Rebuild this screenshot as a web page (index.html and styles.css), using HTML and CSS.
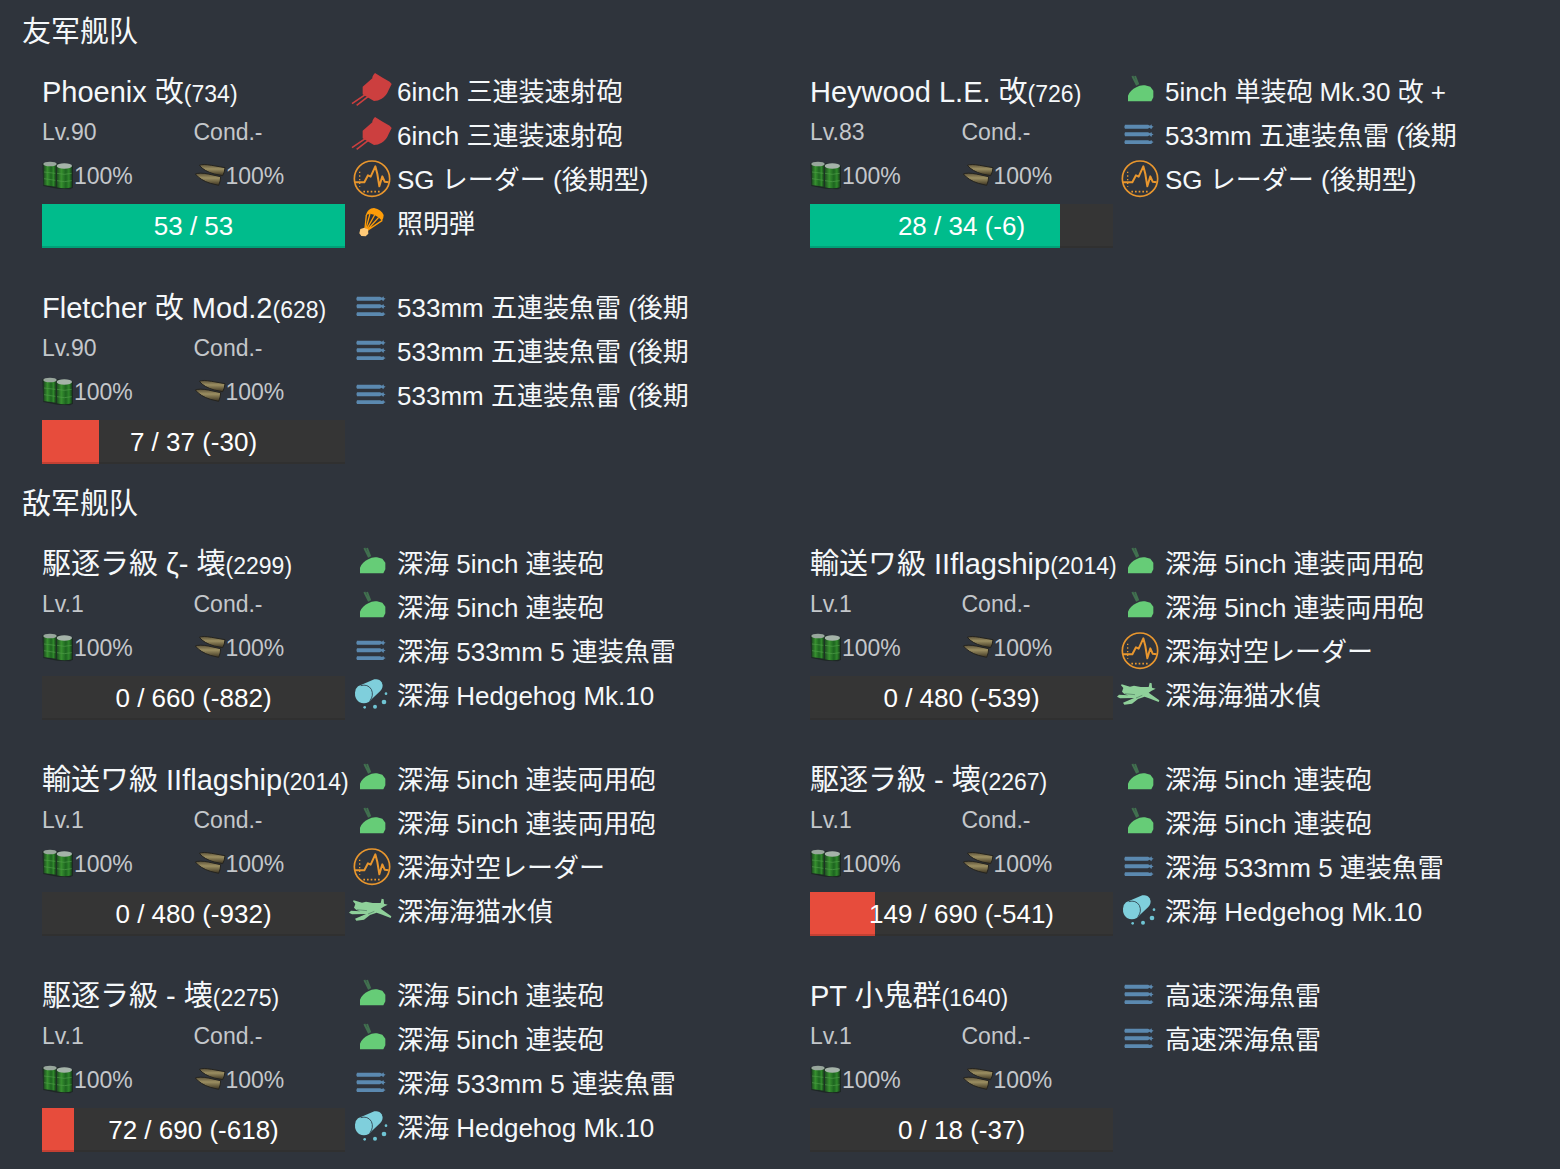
FILE: index.html
```html
<!DOCTYPE html>
<html lang="zh-CN">
<head>
    <meta charset="UTF-8">
    <meta name="viewport" content="width=device-width, initial-scale=1.0">
    <title>舰队</title>
    <link rel="stylesheet" href="styles.css">
</head>
<body>
    <svg class="sprite" aria-hidden="true">
        <defs>
            <linearGradient id="drum">
                <stop offset="0" stop-color="#1c4a20"/>
                <stop offset=".3" stop-color="#37912f"/>
                <stop offset=".6" stop-color="#1d6420"/>
                <stop offset=".8" stop-color="#2f882b"/>
                <stop offset="1" stop-color="#173d1a"/>
            </linearGradient>
            <linearGradient id="shell" x2="0" y2="1">
                <stop offset="0" stop-color="#5a5038"/>
                <stop offset=".4" stop-color="#9c8f62"/>
                <stop offset="1" stop-color="#3a3220"/>
            </linearGradient>
        </defs>
        <symbol id="medium-gun" viewBox="-6 0 132 132">
            <path fill="#cc3f3f" d="M75 9 98 23 119 35 125 42Q121 50 116 60Q108 80 95 86Q84 93 72 93L50 80 38 73V50L67 25Q66 19 75 9Z"/>
            <path stroke="#cc3f3f" stroke-width="5" fill="none" d="M47 73 6 101M54 80 20 106"/>
        </symbol>
        <symbol id="small-gun" viewBox="3 0 132 132">
            <path stroke="#41704f" stroke-width="6" d="M52 18 66 46M60 18 70 44"/>
            <path fill="#66cc77" d="M39 94V77Q46 60 64 52Q76 44 90 46L106 50 115 62V82L109 94Z"/>
        </symbol>
        <symbol id="torpedo" viewBox="3 132 132 132">
            <path fill="#5b89b0" d="M30 164H99L105 167 109 163 111 168 116 170 111 173 109 178 104 173 98 176H30Q26 170 30 164ZM30 187H99L105 190 109 186 111 191 116 193 111 196 109 201 104 196 98 199H30Q26 193 30 187ZM30 211H99L105 213 109 210 111 214 116 216 111 219 109 222H30Q26 217 30 211Z"/>
        </symbol>
        <symbol id="radar" viewBox="-6 9 132 132">
            <g fill="none" stroke="#e8962e">
                <circle cx="66" cy="71" r="53" stroke-width="5"/>
                <path stroke-width="6" stroke-linejoin="round" d="M15 82H43L54 61 62 65 76 34 82 57 88 94 97 64 104 80 116 82"/>
                <path stroke-width="4" stroke-dasharray="4 7" d="M29 50V96"/>
                <path stroke-width="5" stroke-dasharray="5 6" d="M40 110H92"/>
            </g>
        </symbol>
        <symbol id="flare" viewBox="-6 141 132 132">
            <path fill="#ff9d08" d="M47 181Q53 160 72 159Q94 164 101 180Q101 190 96 197L85 187 72 179 60 176Z"/>
            <path stroke="#ff9d08" stroke-width="4" fill="none" d="M49 180 45 220M60 176 48 221M74 180 50 223M86 187 52 225M97 196 51 227"/>
            <path fill="#ffca78" d="M31 222 43 218 54 223 55 236 47 244 34 243 28 235Z"/>
        </symbol>
        <symbol id="depth-charge" viewBox="-6 12 132 132">
            <path fill="#7fcfdc" d="M24 49 73 28Q88 25 95 37Q102 51 91 63L56 96Q42 104 27 96Q14 86 15 68Q16 55 24 49Z"/>
            <path stroke="#39525f" stroke-width="3" fill="none" d="M32 47Q53 41 64 58Q72 76 60 92"/>
            <g fill="#6fc4d3">
                <circle cx="102" cy="96" r="7"/>
                <circle cx="75" cy="110" r="6"/>
                <circle cx="44" cy="112" r="4"/>
                <circle cx="108" cy="71" r="4"/>
            </g>
        </symbol>
        <symbol id="seaplane" viewBox="18 12 132 132">
            <path fill="#8fd09a" d="M35 43 60 50 72 47 92 51 116 51 119 38 125 40 126 53 137 56 125 62 116 68 148 91 146 96 121 86 104 80 84 87 66 101 43 104 39 98 60 89 72 84 30 85 21 80 27 74 54 76 43 72 36 65 40 54 33 46Z"/>
            <path stroke="#4d7a60" stroke-width="2" fill="none" d="M44 71 75 74M78 84 97 76"/>
        </symbol>
        <symbol id="fuel" viewBox="36 15 96 96">
            <path fill="#1d2724" d="M37 25H84L129 32V98L120 103 82 101 40 93Z"/>
            <path fill="url(#drum)" d="M41 27H78V95L41 90Z"/>
            <ellipse cx="60" cy="27" rx="20" ry="7" fill="#98a69c"/>
            <path fill="url(#drum)" d="M80 34H126V97Q103 103 80 97Z"/>
            <ellipse cx="103" cy="33" rx="23" ry="8" fill="#a5b3a9"/>
            <path stroke="#4f9c49" stroke-width="2" fill="none" d="M42 51 76 55M42 71 76 76M81 55Q103 61 125 55M81 77Q103 83 125 77"/>
        </symbol>
        <symbol id="ammo" viewBox="27 15 96 96">
            <g fill="url(#shell)" stroke="#24231f" stroke-width="3">
                <path d="M43 31Q54 26 80 31L120 38Q119 52 113 62L88 57Q58 49 43 31Z"/>
                <path d="M31 57Q44 52 70 57L107 65Q107 78 101 91L76 85Q47 76 31 57Z"/>
            </g>
        </symbol>
    </svg>

    <section class="fleet">
        <h2>友军舰队</h2>
        <div class="ships" lang="ja">
            <article class="ship">
                <div class="info">
                    <h3>Phoenix 改<small>(734)</small></h3>
                    <div class="stats"><span>Lv.90</span><span>Cond.-</span></div>
                    <div class="stats supply"><span><svg><use href="#fuel"/></svg>100%</span><span><svg><use href="#ammo"/></svg>100%</span></div>
                    <div class="hp"><div class="bar good" style="width: 100%"></div><span>53 / 53</span></div>
                </div>
                <ul class="equips">
                    <li><svg><use href="#medium-gun"/></svg>6inch 三連装速射砲</li>
                    <li><svg><use href="#medium-gun"/></svg>6inch 三連装速射砲</li>
                    <li><svg><use href="#radar"/></svg>SG レーダー (後期型)</li>
                    <li><svg><use href="#flare"/></svg>照明弾</li>
                </ul>
            </article>
            <article class="ship">
                <div class="info">
                    <h3>Heywood L.E. 改<small>(726)</small></h3>
                    <div class="stats"><span>Lv.83</span><span>Cond.-</span></div>
                    <div class="stats supply"><span><svg><use href="#fuel"/></svg>100%</span><span><svg><use href="#ammo"/></svg>100%</span></div>
                    <div class="hp"><div class="bar good" style="width: 82.35%"></div><span>28 / 34 (-6)</span></div>
                </div>
                <ul class="equips">
                    <li><svg><use href="#small-gun"/></svg>5inch 単装砲 Mk.30 改 +</li>
                    <li><svg><use href="#torpedo"/></svg>533mm 五連装魚雷 (後期</li>
                    <li><svg><use href="#radar"/></svg>SG レーダー (後期型)</li>
                </ul>
            </article>
            <article class="ship">
                <div class="info">
                    <h3>Fletcher 改 Mod.2<small>(628)</small></h3>
                    <div class="stats"><span>Lv.90</span><span>Cond.-</span></div>
                    <div class="stats supply"><span><svg><use href="#fuel"/></svg>100%</span><span><svg><use href="#ammo"/></svg>100%</span></div>
                    <div class="hp"><div class="bar bad" style="width: 18.92%"></div><span>7 / 37 (-30)</span></div>
                </div>
                <ul class="equips">
                    <li><svg><use href="#torpedo"/></svg>533mm 五連装魚雷 (後期</li>
                    <li><svg><use href="#torpedo"/></svg>533mm 五連装魚雷 (後期</li>
                    <li><svg><use href="#torpedo"/></svg>533mm 五連装魚雷 (後期</li>
                </ul>
            </article>
        </div>
    </section>

    <section class="fleet">
        <h2>敌军舰队</h2>
        <div class="ships" lang="ja">
            <article class="ship">
                <div class="info">
                    <h3>駆逐ラ級 ζ- 壊<small>(2299)</small></h3>
                    <div class="stats"><span>Lv.1</span><span>Cond.-</span></div>
                    <div class="stats supply"><span><svg><use href="#fuel"/></svg>100%</span><span><svg><use href="#ammo"/></svg>100%</span></div>
                    <div class="hp"><span>0 / 660 (-882)</span></div>
                </div>
                <ul class="equips">
                    <li><svg><use href="#small-gun"/></svg>深海 5inch 連装砲</li>
                    <li><svg><use href="#small-gun"/></svg>深海 5inch 連装砲</li>
                    <li><svg><use href="#torpedo"/></svg>深海 533mm 5 連装魚雷</li>
                    <li><svg><use href="#depth-charge"/></svg>深海 Hedgehog Mk.10</li>
                </ul>
            </article>
            <article class="ship">
                <div class="info">
                    <h3>輸送ワ級 IIflagship<small>(2014)</small></h3>
                    <div class="stats"><span>Lv.1</span><span>Cond.-</span></div>
                    <div class="stats supply"><span><svg><use href="#fuel"/></svg>100%</span><span><svg><use href="#ammo"/></svg>100%</span></div>
                    <div class="hp"><span>0 / 480 (-539)</span></div>
                </div>
                <ul class="equips">
                    <li><svg><use href="#small-gun"/></svg>深海 5inch 連装両用砲</li>
                    <li><svg><use href="#small-gun"/></svg>深海 5inch 連装両用砲</li>
                    <li><svg><use href="#radar"/></svg>深海対空レーダー</li>
                    <li><svg><use href="#seaplane"/></svg>深海海猫水偵</li>
                </ul>
            </article>
            <article class="ship">
                <div class="info">
                    <h3>輸送ワ級 IIflagship<small>(2014)</small></h3>
                    <div class="stats"><span>Lv.1</span><span>Cond.-</span></div>
                    <div class="stats supply"><span><svg><use href="#fuel"/></svg>100%</span><span><svg><use href="#ammo"/></svg>100%</span></div>
                    <div class="hp"><span>0 / 480 (-932)</span></div>
                </div>
                <ul class="equips">
                    <li><svg><use href="#small-gun"/></svg>深海 5inch 連装両用砲</li>
                    <li><svg><use href="#small-gun"/></svg>深海 5inch 連装両用砲</li>
                    <li><svg><use href="#radar"/></svg>深海対空レーダー</li>
                    <li><svg><use href="#seaplane"/></svg>深海海猫水偵</li>
                </ul>
            </article>
            <article class="ship">
                <div class="info">
                    <h3>駆逐ラ級 - 壊<small>(2267)</small></h3>
                    <div class="stats"><span>Lv.1</span><span>Cond.-</span></div>
                    <div class="stats supply"><span><svg><use href="#fuel"/></svg>100%</span><span><svg><use href="#ammo"/></svg>100%</span></div>
                    <div class="hp"><div class="bar bad" style="width: 21.59%"></div><span>149 / 690 (-541)</span></div>
                </div>
                <ul class="equips">
                    <li><svg><use href="#small-gun"/></svg>深海 5inch 連装砲</li>
                    <li><svg><use href="#small-gun"/></svg>深海 5inch 連装砲</li>
                    <li><svg><use href="#torpedo"/></svg>深海 533mm 5 連装魚雷</li>
                    <li><svg><use href="#depth-charge"/></svg>深海 Hedgehog Mk.10</li>
                </ul>
            </article>
            <article class="ship">
                <div class="info">
                    <h3>駆逐ラ級 - 壊<small>(2275)</small></h3>
                    <div class="stats"><span>Lv.1</span><span>Cond.-</span></div>
                    <div class="stats supply"><span><svg><use href="#fuel"/></svg>100%</span><span><svg><use href="#ammo"/></svg>100%</span></div>
                    <div class="hp"><div class="bar bad" style="width: 10.43%"></div><span>72 / 690 (-618)</span></div>
                </div>
                <ul class="equips">
                    <li><svg><use href="#small-gun"/></svg>深海 5inch 連装砲</li>
                    <li><svg><use href="#small-gun"/></svg>深海 5inch 連装砲</li>
                    <li><svg><use href="#torpedo"/></svg>深海 533mm 5 連装魚雷</li>
                    <li><svg><use href="#depth-charge"/></svg>深海 Hedgehog Mk.10</li>
                </ul>
            </article>
            <article class="ship">
                <div class="info">
                    <h3>PT 小鬼群<small>(1640)</small></h3>
                    <div class="stats"><span>Lv.1</span><span>Cond.-</span></div>
                    <div class="stats supply"><span><svg><use href="#fuel"/></svg>100%</span><span><svg><use href="#ammo"/></svg>100%</span></div>
                    <div class="hp"><span>0 / 18 (-37)</span></div>
                </div>
                <ul class="equips">
                    <li><svg><use href="#torpedo"/></svg>高速深海魚雷</li>
                    <li><svg><use href="#torpedo"/></svg>高速深海魚雷</li>
                </ul>
            </article>
        </div>
    </section>
</body>
</html>
```
FILE: styles.css
```css
*{
    box-sizing: border-box;
}

body{
    margin: 0;
    padding: 10px 22px 0;
    background: #2f343c;
    color: #f5f8fa;
    font-family: "Liberation Sans", "Noto Sans CJK SC", sans-serif;
    font-size: 26px;
    line-height: 44px;
}

.sprite{
    position: absolute;
    width: 0;
    height: 0;
}

h2, h3{
    margin: 0;
    font-size: 29px;
    font-weight: normal;
    line-height: 44px;
}

.fleet{
    padding-bottom: 18px;
}

.fleet > h2{
    margin-bottom: 16px;
}

.ships{
    display: grid;
    grid-template-columns: 1fr 1fr;
    gap: 38px 40px;
    margin-left: 20px;
    font-family: "Liberation Sans", "Noto Sans CJK JP", sans-serif;
}

.ship{
    display: flex;
    gap: 3px;
}

.info{
    flex: none;
    width: 303px;
}

.info h3{
    white-space: nowrap;
}

.info small{
    font-size: 23px;
    line-height: 1;
}

.stats{
    display: grid;
    grid-template-columns: 1fr 1fr;
    color: #c4c7cb;
    font-size: 23px;
    line-height: 36px;
}

.stats span{
    display: flex;
    align-items: center;
}

.supply{
    margin: 4px 0 6px;
    line-height: 44px;
}

.supply svg{
    width: 32px;
    height: 32px;
}

/* hp bar */
.hp{
    position: relative;
    height: 44px;
    background: #353535;
    color: #fff;
    text-align: center;
    box-shadow: inset 0 -2px 0 #303030;
}

.hp span{
    position: relative;
}

.bar{
    position: absolute;
    left: 0;
    top: 0;
    height: 100%;
    box-shadow: inset 0 -2px 0 rgba(0, 0, 0, .15);
}

.good{
    background: #00bc8c;
}

.bad{
    background: #e74c3c;
}

.equips{
    margin: 0;
    padding: 0;
    list-style: none;
}

.equips li{
    display: flex;
    align-items: center;
    gap: 5px;
    height: 44px;
    white-space: nowrap;
}

.equips svg{
    flex: none;
    width: 44px;
    height: 44px;
}
```
